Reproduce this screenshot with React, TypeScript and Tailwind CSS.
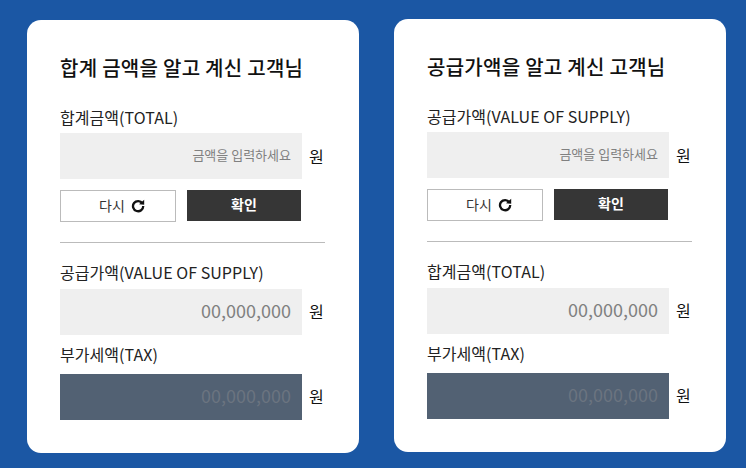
const FONT = "font-['Noto_Sans_CJK_KR','Noto_Sans',sans-serif]"

function RefreshIcon() {
  return (
    <svg className="w-[14px] h-[14px]" viewBox="0 0 14 14" fill="none" aria-hidden="true">
      <path d="M11.4 4.4A5.1 5.1 0 1 0 12.2 7" stroke="#111" strokeWidth="2.3" />
      <path d="M8 5.2L13.2 5.8V0.8z" fill="#111" />
    </svg>
  )
}

function AmountRow({ value, dark }: { value: string; dark?: boolean }) {
  return (
    <div className="flex items-center">
      <div
        className={`w-[242px] h-[46px] flex items-center justify-end pr-[11px] pb-[3px] text-[18px] ${
          dark ? 'bg-[#526173] text-[#6b7480]' : 'bg-[#efefef] text-[#808080]'
        }`}
      >
        {value}
      </div>
      <span className="ml-[7px] mb-[3px] text-[16px] text-[#111]">원</span>
    </div>
  )
}

function Card({
  title,
  inputLabel,
  firstLabel,
  className,
}: {
  title: string
  inputLabel: string
  firstLabel: string
  className: string
}) {
  return (
    <div className={`w-[332px] h-[433px] bg-white rounded-[14px] pl-[33px] pr-[34px] pt-[32px] ${className}`}>
      <h2 className="h-[30px] leading-[31px] text-[20px] font-medium text-[#111] tracking-[0.28px]">{title}</h2>
      <div className="mt-[21px] h-[30px] leading-[29px] text-[16px] text-[#222] tracking-[0.05px]">{inputLabel}</div>
      <div className="flex items-center">
        <div className="w-[242px] h-[46px] bg-[#efefef] flex items-center justify-end pr-[11px] pb-[2px] text-[13px] text-[#808080]">
          금액을 입력하세요
        </div>
        <span className="ml-[7px] text-[16px] text-[#111]">원</span>
      </div>
      <div className="flex items-start mt-[11px]">
        <button className="w-[116px] h-[32px] border border-[#bbb] bg-white flex items-center justify-center pl-[8px] pb-[1px] gap-[6px] text-[14px] text-[#333]">
          다시 <RefreshIcon />
        </button>
        <button className="ml-[11px] w-[114px] h-[31px] bg-[#363636] pb-[2px] text-white text-[14px] font-bold flex items-center justify-center">
          확인
        </button>
      </div>
      <div className="mt-[20px] w-[265px] h-px bg-[#bbb]" />
      <div className="mt-[15px] h-[31px] leading-[29px] text-[16px] text-[#222] tracking-[0.05px]">{firstLabel}</div>
      <AmountRow value="00,000,000" />
      <div className="mt-[5px] h-[34px] leading-[28px] text-[16px] text-[#222] tracking-[0.05px]">부가세액(TAX)</div>
      <AmountRow value="00,000,000" dark />
    </div>
  )
}

export default function App() {
  return (
    <div className={`w-[746px] h-[468px] overflow-hidden bg-[#1b57a4] flex items-start pl-[27px] gap-[35px] ${FONT}`}>
      <Card
        className="mt-[20px]"
        title="합계 금액을 알고 계신 고객님"
        inputLabel="합계금액(TOTAL)"
        firstLabel="공급가액(VALUE OF SUPPLY)"
      />
      <Card
        className="mt-[19px]"
        title="공급가액을 알고 계신 고객님"
        inputLabel="공급가액(VALUE OF SUPPLY)"
        firstLabel="합계금액(TOTAL)"
      />
    </div>
  )
}
